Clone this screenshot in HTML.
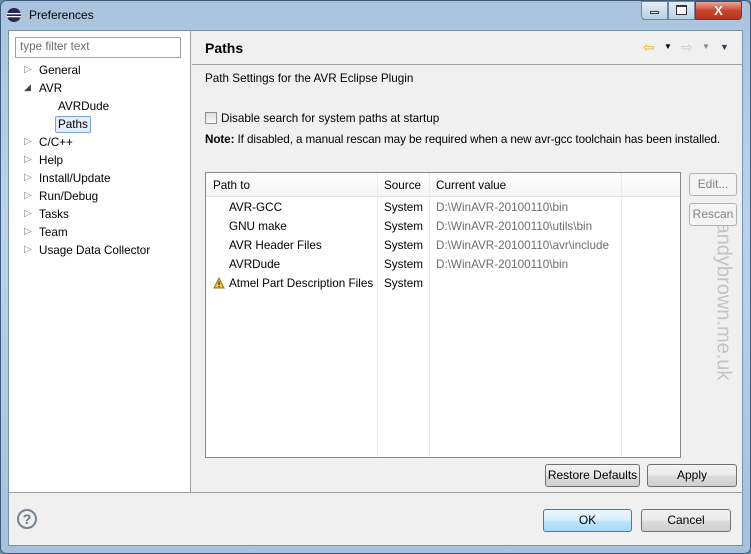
<!DOCTYPE html>
<html><head><style>
*{margin:0;padding:0;box-sizing:border-box}
body{width:751px;height:554px;overflow:hidden;background:#6b8db3;font-family:"Liberation Sans",sans-serif;font-size:11.7px;color:#000;position:relative}
.abs{position:absolute}
.frame{left:0;top:0;width:751px;height:554px;background:linear-gradient(#a9c3de,#bcd3ea 40%,#a6c1dd);border:1px solid #3d5a7a;border-radius:6px}
.client{left:8px;top:30px;width:735px;height:516px;background:#f0f0f0;border:1px solid #7a93ad}
.btn{position:absolute;border:1px solid #707070;border-radius:3px;background:linear-gradient(#f2f2f2,#ebebeb 50%,#dddddd 51%,#cfcfcf);text-align:center;font-size:12px}
.dis{border-color:#adb2b5;background:#f4f4f4;color:#838383}
.t{position:absolute;white-space:nowrap}
.g{color:#6d6d6d}
</style></head><body>
<div class="abs frame"></div>
<svg class="abs" style="left:6px;top:7px" width="16" height="16"><circle cx="8" cy="8" r="7" fill="#2c2255"/><rect x="1" y="6" width="14" height="1.3" fill="#fff"/><rect x="1" y="9" width="14" height="1.3" fill="#fff"/></svg>
<div class="t" style="left:29px;top:8px;font-size:12px">Preferences</div>
<div class="abs" style="left:641px;top:1px;width:27px;height:19px;border:1px solid #6d85a0;border-radius:0 0 0 4px;background:linear-gradient(#e6eef7,#b9cde3)"></div>
<div class="abs" style="left:650px;top:11px;width:9px;height:3px;border:1px solid #333;background:#fff"></div>
<div class="abs" style="left:668px;top:1px;width:27px;height:19px;border:1px solid #6d85a0;background:linear-gradient(#e6eef7,#b9cde3)"></div>
<div class="abs" style="left:676px;top:5px;width:11px;height:10px;border:1px solid #333;border-top-width:2px;background:#fff"></div>
<div class="abs" style="left:695px;top:1px;width:47px;height:19px;border:1px solid #7a3a30;border-radius:0 0 4px 0;background:linear-gradient(#e9a99a,#c8452c 50%,#b8331c);color:#fff;font-weight:bold;text-align:center;font-size:13px;line-height:18px">X</div>
<div class="abs client"></div>
<div class="abs" style="left:9px;top:31px;width:182px;height:461px;background:#fff;border-right:1px solid #a0a0a0"></div>
<div class="abs" style="left:15px;top:37px;width:166px;height:21px;border:1px solid #a0a0a0;background:#fff"></div>
<div class="t g" style="left:20px;top:40px">type filter text</div>
<div class="t" style="left:24px;top:64px;color:#888;font-size:10px">▷</div><div class="t" style="left:39px;top:64px">General</div>
<div class="t" style="left:24px;top:82px;color:#444;font-size:9px">◢</div><div class="t" style="left:39px;top:82px">AVR</div>
<div class="t" style="left:58px;top:100px">AVRDude</div>
<div class="abs" style="left:55px;top:116px;width:36px;height:17px;background:#e4eefa;border:1px solid #7da2ce;border-radius:2px"></div>
<div class="t" style="left:58px;top:118px">Paths</div>
<div class="t" style="left:24px;top:136px;color:#888;font-size:10px">▷</div><div class="t" style="left:39px;top:136px">C/C++</div>
<div class="t" style="left:24px;top:154px;color:#888;font-size:10px">▷</div><div class="t" style="left:39px;top:154px">Help</div>
<div class="t" style="left:24px;top:172px;color:#888;font-size:10px">▷</div><div class="t" style="left:39px;top:172px">Install/Update</div>
<div class="t" style="left:24px;top:190px;color:#888;font-size:10px">▷</div><div class="t" style="left:39px;top:190px">Run/Debug</div>
<div class="t" style="left:24px;top:208px;color:#888;font-size:10px">▷</div><div class="t" style="left:39px;top:208px">Tasks</div>
<div class="t" style="left:24px;top:226px;color:#888;font-size:10px">▷</div><div class="t" style="left:39px;top:226px">Team</div>
<div class="t" style="left:24px;top:244px;color:#888;font-size:10px">▷</div><div class="t" style="left:39px;top:244px">Usage Data Collector</div>
<div class="abs" style="left:192px;top:64px;width:551px;height:1px;background:#a0a0a0"></div>
<div class="t" style="left:205px;top:40px;font-size:14px;font-weight:bold">Paths</div>
<div class="t" style="left:643px;top:39px;color:#e8b520;font-size:14px">⇦</div>
<div class="t" style="left:664px;top:42px;font-size:8px">▼</div>
<div class="t" style="left:681px;top:39px;color:#c8c8c8;font-size:14px">⇨</div>
<div class="t" style="left:702px;top:42px;font-size:8px;color:#888">▼</div>
<div class="t" style="left:720px;top:42px;font-size:9px;color:#333a6e">▼</div>
<div class="t" style="left:205px;top:72px">Path Settings for the AVR Eclipse Plugin</div>
<div class="abs" style="left:205px;top:112px;width:12px;height:12px;border:1px solid #8e8f8f;background:linear-gradient(#ddd,#fafafa)"></div>
<div class="t" style="left:221px;top:112px">Disable search for system paths at startup</div>
<div class="t" style="left:205px;top:133px;letter-spacing:-0.1px"><b>Note:</b> If disabled, a manual rescan may be required when a new avr-gcc toolchain has been installed.</div>
<div class="abs" style="left:205px;top:172px;width:476px;height:286px;background:#fff;border:1px solid #828790"></div>
<div class="abs" style="left:206px;top:173px;width:474px;height:24px;background:linear-gradient(#fff,#f5f5f5);border-bottom:1px solid #e0e0e0"></div>
<div class="abs" style="left:377px;top:173px;width:1px;height:284px;background:#ebebeb"></div>
<div class="abs" style="left:429px;top:173px;width:1px;height:284px;background:#ebebeb"></div>
<div class="abs" style="left:621px;top:173px;width:1px;height:284px;background:#ebebeb"></div>
<div class="t" style="left:213px;top:179px">Path to</div>
<div class="t" style="left:384px;top:179px">Source</div>
<div class="t" style="left:436px;top:179px">Current value</div>
<div class="t" style="left:229px;top:201px">AVR-GCC</div><div class="t" style="left:384px;top:201px">System</div><div class="t g" style="left:436px;top:201px">D:\WinAVR-20100110\bin</div>
<div class="t" style="left:229px;top:220px">GNU make</div><div class="t" style="left:384px;top:220px">System</div><div class="t g" style="left:436px;top:220px">D:\WinAVR-20100110\utils\bin</div>
<div class="t" style="left:229px;top:239px">AVR Header Files</div><div class="t" style="left:384px;top:239px">System</div><div class="t g" style="left:436px;top:239px">D:\WinAVR-20100110\avr\include</div>
<div class="t" style="left:229px;top:258px">AVRDude</div><div class="t" style="left:384px;top:258px">System</div><div class="t g" style="left:436px;top:258px">D:\WinAVR-20100110\bin</div>
<svg class="abs" style="left:213px;top:277px" width="12" height="12"><path d="M6 1L11 11H1Z" fill="#f2c230" stroke="#a07010"/><rect x="5.4" y="4.5" width="1.3" height="3.5" fill="#333"/><rect x="5.4" y="9" width="1.3" height="1.2" fill="#333"/></svg>
<div class="t" style="left:229px;top:277px">Atmel Part Description Files</div><div class="t" style="left:384px;top:277px">System</div>
<div class="t" style="left:623px;top:290px;transform:rotate(90deg);transform-origin:center;width:200px;text-align:center;color:#c4c4c4;font-size:20px">andybrown.me.uk</div>
<div class="btn dis" style="left:689px;top:173px;width:48px;height:23px;line-height:21px">Edit...</div>
<div class="btn dis" style="left:689px;top:203px;width:48px;height:23px;line-height:21px">Rescan</div>
<div class="btn" style="left:545px;top:464px;width:95px;height:23px;line-height:21px">Restore Defaults</div>
<div class="btn" style="left:647px;top:464px;width:90px;height:23px;line-height:21px">Apply</div>
<div class="abs" style="left:9px;top:492px;width:734px;height:1px;background:#a0a0a0"></div>
<div class="abs" style="left:17px;top:509px;width:20px;height:20px;border:2px solid #7a8290;border-radius:50%;text-align:center;font-weight:bold;color:#6a7280;font-size:14px;line-height:16px">?</div>
<div class="btn" style="left:543px;top:509px;width:89px;height:23px;line-height:21px;border-color:#3c7fb1;background:linear-gradient(#eaf6fd,#d9f0fc 50%,#bee6fd 51%,#a7d9f5)">OK</div>
<div class="btn" style="left:641px;top:509px;width:90px;height:23px;line-height:21px">Cancel</div>
</body></html>
